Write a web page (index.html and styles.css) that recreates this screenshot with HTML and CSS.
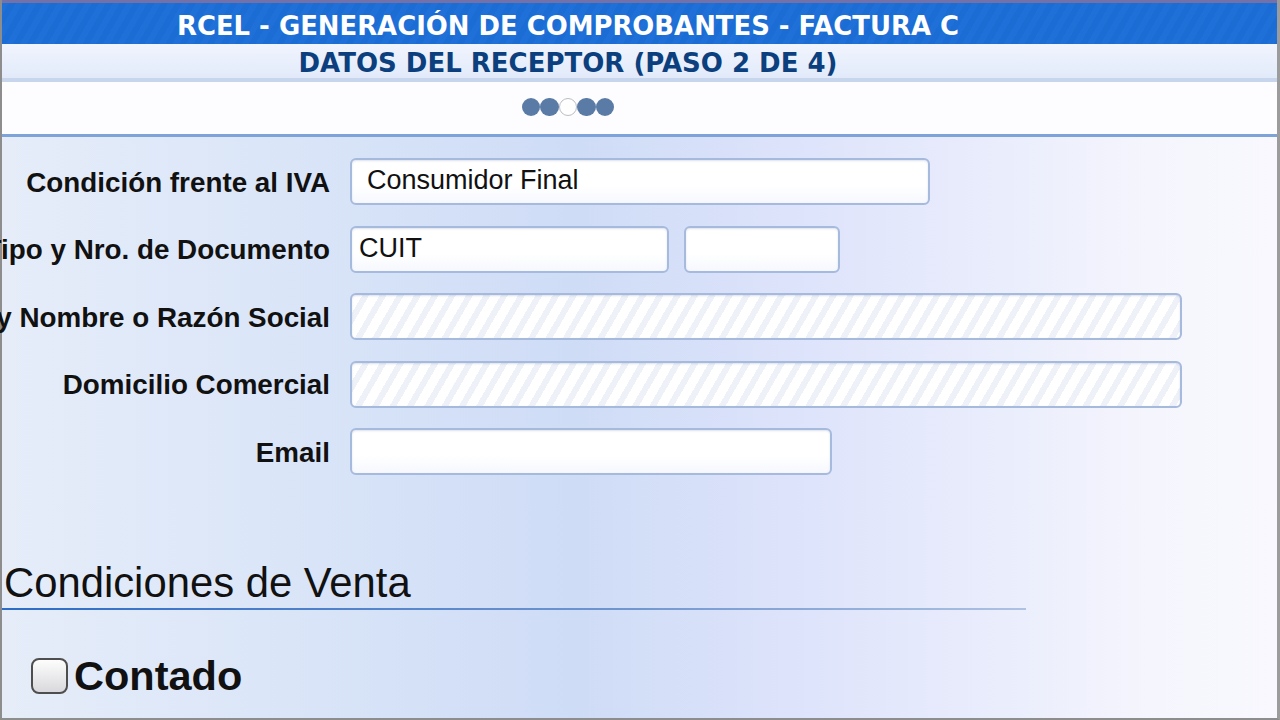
FILE: index.html
```html
<!DOCTYPE html>
<html lang="es">
<head>
  <meta charset="UTF-8" />
  <meta name="viewport" content="width=device-width, initial-scale=1.0" />
  <title>RCEL - Generación de Comprobantes</title>
  <link rel="stylesheet" href="styles.css">
</head>
<body>
  <div class="frame">
    <header>
      <div class="title-bar">
        <h1>RCEL - GENERACIÓN DE COMPROBANTES - FACTURA C</h1>
      </div>
      <div class="step-bar">
        <h2>DATOS DEL RECEPTOR (PASO 2 DE 4)</h2>
      </div>
      <div class="dots-bar">
        <div class="dots">
          <span class="dot"></span>
          <span class="dot"></span>
          <span class="dot current"></span>
          <span class="dot"></span>
          <span class="dot"></span>
        </div>
      </div>
    </header>

    <main class="content">
      <div class="form">
        <div class="row">
          <label class="label" for="iva"><span>Condición frente al IVA</span></label>
          <select id="iva" class="field field-select w-iva">
            <option>Consumidor Final</option>
          </select>
        </div>

        <div class="row">
          <label class="label" for="tipodoc"><span>Tipo y Nro. de Documento</span></label>
          <select id="tipodoc" class="field field-select short w-tipo">
            <option>CUIT</option>
          </select>
          <input type="text" class="field w-nro" id="nrodoc">
        </div>

        <div class="row">
          <label class="label" for="razon"><span>Apellido y Nombre o Razón Social</span></label>
          <input type="text" class="field w-full" id="razon" disabled>
        </div>

        <div class="row">
          <label class="label" for="domicilio"><span>Domicilio Comercial</span></label>
          <input type="text" class="field w-full" id="domicilio" disabled>
        </div>

        <div class="row">
          <label class="label" for="email"><span>Email</span></label>
          <input type="text" class="field w-email" id="email">
        </div>
      </div>

      <section class="sale">
        <h3>Condiciones de Venta</h3>
        <label class="check">
          <input type="checkbox" id="contado">
          <span class="box"></span>
          Contado
        </label>
      </section>
    </main>
  </div>
</body>
</html>
```

FILE: styles.css
```css
html, body {
  margin: 0;
  padding: 0;
  height: 100%;
  overflow: hidden;
}

body {
  font-family: "Liberation Sans", Arial, sans-serif;
  color: #111;
  background: #fff;
}

.frame {
  height: 720px;
  box-sizing: border-box;
  border-left: 2px solid #8d8d8d;
  border-right: 3px solid #9c9c9c;
  border-bottom: 2px solid #8d8d8d;
  display: flex;
  flex-direction: column;
  background: linear-gradient(to right, #e6edf9 0%, #dbe6f8 20%, #cfdcf6 45%, #dde3fb 62%, #ebeefc 80%, #f5f5fd 90%, #f8f8fe 100%);
}

/* header bars */
.title-bar {
  height: 41px;
  border-top: 3px solid #7470a8;
  background: #1b6ed7 repeating-linear-gradient(120deg, rgba(255,255,255,0.015) 0 6px, rgba(0,0,0,0.01) 6px 12px);
}

.title-bar h1,
.step-bar h2 {
  width: 1132px;
  margin: 0;
  text-align: center;
  font-family: "DejaVu Sans", Verdana, sans-serif;
  font-weight: bold;
  white-space: nowrap;
}

.title-bar h1 {
  color: #fff;
  font-size: 25.9px;
  line-height: 46px;
}

.step-bar {
  height: 34px;
  background: linear-gradient(to bottom, #f0f4fd, #e2eafa);
  border-bottom: 4px solid #c7d5ed;
}

.step-bar h2 {
  color: #0c3f7d;
  font-size: 26px;
  line-height: 38px;
}

.dots-bar {
  height: 52px;
  background: #fdfdff;
  border-bottom: 3px solid #7ea3d8;
  display: flex;
  align-items: center;
}

.dots {
  width: 1132px;
  display: flex;
  justify-content: center;
  padding-bottom: 2px;
}

.dot {
  width: 18.6px;
  height: 18.6px;
  border-radius: 50%;
  background: #5b7ba7;
  box-sizing: border-box;
}

.dot.current {
  background: #fff;
  border: 1.5px solid #b9bdc6;
}

/* form */
.content {
  flex: 1;
}

.form {
  padding-top: 21px;
  display: flex;
  flex-direction: column;
  gap: 20.5px;
}

.row {
  display: flex;
  align-items: center;
  height: 47px;
}

.label {
  width: 328px;
  flex-shrink: 0;
  margin-right: 20px;
  display: flex;
  justify-content: flex-end;
  font-weight: bold;
  font-size: 27.8px;
  padding-top: 2px;
}

.label span {
  white-space: nowrap;
  flex-shrink: 0;
}

.field {
  height: 47px;
  box-sizing: border-box;
  border: 2px solid #a6badd;
  border-radius: 6px;
  background: linear-gradient(to bottom, #fff 0%, #fff 60%, #f6f8fe 100%);
  box-shadow: inset 0 1px 2px rgba(120, 140, 180, 0.25);
  font-family: "Liberation Sans", Arial, sans-serif;
  font-size: 27px;
  color: #111;
  padding: 0 15px 3px;
  margin: 0;
  outline: none;
  -webkit-appearance: none;
  appearance: none;
}

.field-select {
  padding-left: 15px;
}

.field-select.short {
  padding-left: 7px;
}

.field:disabled {
  background: repeating-linear-gradient(120deg, #ffffff 0 9px, #eef1f8 9px 15px);
}

.w-iva { width: 580px; }
.w-tipo { width: 319px; }
.w-nro { width: 156px; margin-left: 15px; }
.w-full { width: 832px; }
.w-email { width: 482px; }

/* sale conditions */
.sale {
  margin-top: 86px;
}

.sale h3 {
  margin: 0;
  width: 1022px;
  padding-left: 2px;
  font-weight: normal;
  font-size: 41.8px;
  line-height: 44px;
  padding-bottom: 3px;
  border-bottom: 2px solid transparent;
  border-image: linear-gradient(to right, #2c6cc6, #6f95cf 60%, #aec2e2) 1;
}

.check {
  margin-top: 43px;
  margin-left: 29px;
  display: flex;
  align-items: center;
  gap: 6px;
  font-weight: bold;
  font-size: 41.5px;
  line-height: 46px;
}

.check input {
  display: none;
}

.box {
  width: 37px;
  height: 36px;
  box-sizing: border-box;
  border: 2px solid #4e4e4e;
  border-radius: 8px;
  background: linear-gradient(to bottom, #fdfdfd, #d9d9dd);
}
```
